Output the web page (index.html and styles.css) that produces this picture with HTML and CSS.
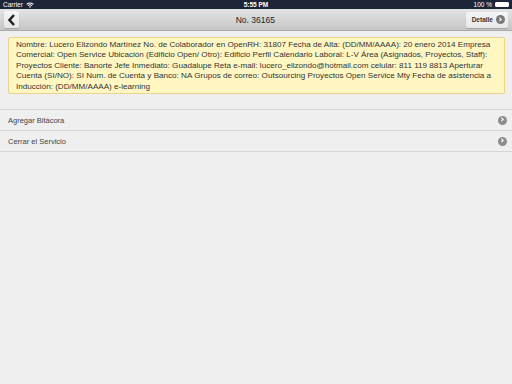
FILE: index.html
```html
<!DOCTYPE html>
<html lang="es">
<head>
    <meta charset="UTF-8">
    <title>No. 36165</title>
    <link rel="stylesheet" href="styles.css">
</head>
<body>
    <!-- Status bar -->
    <div class="status-bar">
        <div class="status-left">Carrier
            <svg class="wifi" width="8" height="6" viewBox="0 0 8 6">
                <path d="M0.3 2 A5.5 5.5 0 0 1 7.7 2 L7 2.8 A4.5 4.5 0 0 0 1 2.8 Z" fill="#fff"/>
                <path d="M1.6 3.4 A3.6 3.6 0 0 1 6.4 3.4 L5.7 4.1 A2.6 2.6 0 0 0 2.3 4.1 Z" fill="#fff"/>
                <path d="M4 6 L3 4.8 A1.5 1.5 0 0 1 5 4.8 Z" fill="#fff"/>
            </svg>
        </div>
        <div class="status-time">5:55 PM</div>
        <div class="status-right">100 %
            <span class="battery"><span class="battery-fill"></span></span>
        </div>
    </div>

    <!-- Navigation bar -->
    <div class="nav-bar">
        <a href="#" class="back-btn">
            <svg width="10" height="12" viewBox="0 0 10 12">
                <path d="M7 1 L2.5 6 L7 11" fill="none" stroke="#222" stroke-width="2.6" stroke-linejoin="miter"/>
            </svg>
        </a>
        <div class="nav-title">No. 36165</div>
        <a href="#" class="detail-btn">Detalle
            <span class="circle-arrow dark"></span>
        </a>
    </div>

    <div class="content">
        <div class="info-box">
            Nombre: Lucero Elizondo Martínez No. de Colaborador en OpenRH: 31807 Fecha de Alta: (DD/MM/AAAA): 20 enero 2014 Empresa Comercial: Open Service Ubicación (Edificio Open/ Otro): Edificio Perfil Calendario Laboral: L-V Área (Asignados, Proyectos, Staff): Proyectos Cliente: Banorte Jefe Inmediato: Guadalupe Reta e-mail: lucero_elizondo@hotmail.com celular: 811 119 8813 Aperturar Cuenta (SI/NO): SI Num. de Cuenta y Banco: NA Grupos de correo: Outsourcing Proyectos Open Service Mty Fecha de asistencia a Inducción: (DD/MM/AAAA) e-learning
        </div>

        <ul class="action-list">
            <li class="action-item">Agregar Bitácora <span class="circle-arrow"></span></li>
            <li class="action-item">Cerrar el Servicio <span class="circle-arrow"></span></li>
        </ul>
    </div>
</body>
</html>
```

FILE: styles.css
```css
* {
    margin: 0;
    padding: 0;
    box-sizing: border-box;
}

body {
    font-family: 'Liberation Sans', Arial, sans-serif;
    background: #efefef;
    height: 384px;
    overflow: hidden;
}

/* Status bar */
.status-bar {
    height: 9px;
    background: #1d2539;
    color: #fff;
    font-size: 6.5px;
    display: flex;
    align-items: center;
    justify-content: space-between;
    padding: 0 3px;
}

.status-left,
.status-right {
    width: 60px;
    display: flex;
    align-items: center;
    gap: 3px;
}

.status-right {
    justify-content: flex-end;
}

.status-time {
    font-weight: bold;
}

.battery {
    width: 14px;
    height: 5px;
    border: 1px solid #fff;
    border-radius: 1px;
    display: inline-block;
}

.battery-fill {
    display: block;
    width: 100%;
    height: 100%;
    background: #fff;
}

/* Navigation bar */
.nav-bar {
    height: 22px;
    background: linear-gradient(#e4e4e4, #c6c6c6);
    border-bottom: 1px solid #a9a9a9;
    display: flex;
    align-items: center;
    justify-content: space-between;
    padding: 0 4px 0 4px;
}

.back-btn {
    width: 15px;
    height: 17px;
    background: linear-gradient(#f5f5f5, #e6e6e6);
    border-radius: 2px;
    display: flex;
    align-items: center;
    justify-content: center;
    box-shadow: 0 1px 1px rgba(0, 0, 0, 0.2);
}

.nav-title {
    font-size: 8.5px;
    color: #222;
    margin-left: 26px;
}

.detail-btn {
    height: 16px;
    padding: 0 3px 0 6px;
    background: linear-gradient(#f5f5f5, #e8e8e8);
    border-radius: 2px;
    display: flex;
    align-items: center;
    gap: 3px;
    font-size: 6.5px;
    font-weight: bold;
    color: #333;
    text-decoration: none;
    box-shadow: 0 1px 1px rgba(0, 0, 0, 0.2);
}

/* Circle arrow icon */
.circle-arrow {
    width: 9px;
    height: 9px;
    border-radius: 50%;
    background: #8c8c8c;
    position: relative;
    display: inline-block;
}

.circle-arrow::after {
    content: '';
    position: absolute;
    top: 2.8px;
    left: 2.3px;
    width: 2.4px;
    height: 2.4px;
    border-top: 1.4px solid #fff;
    border-right: 1.4px solid #fff;
    transform: rotate(45deg);
}

.circle-arrow.dark {
    background: #7a7a7a;
}

/* Content */
.content {
    padding-top: 6px;
}

.info-box {
    margin: 0 7px 0 8px;
    padding: 2px 7px 1px 7px;
    background: #fff6c2;
    border: 1px solid #ecd38a;
    border-radius: 2px;
    font-size: 8.1px;
    line-height: 10.4px;
    color: #333;
}

.action-list {
    list-style: none;
    margin-top: 15px;
    border-top: 1px solid #d6d6d6;
}

.action-item {
    height: 21px;
    border-bottom: 1px solid #d6d6d6;
    display: flex;
    align-items: center;
    justify-content: space-between;
    padding: 0 5px 0 8px;
    font-size: 7.5px;
    color: #444;
}
```
